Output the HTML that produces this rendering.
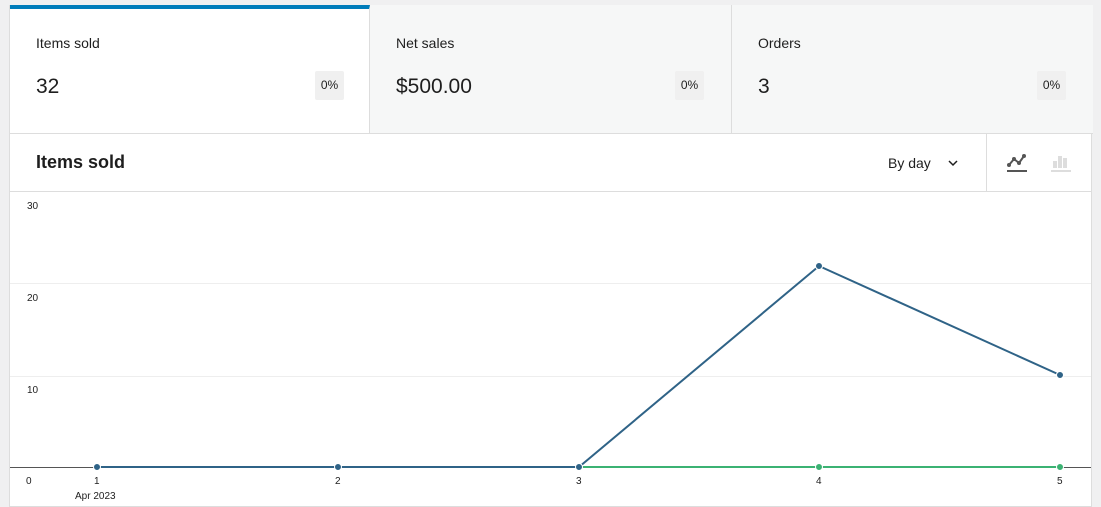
<!DOCTYPE html><html><head><style>
body{margin:0;background:#f0f0f1;font-family:"Liberation Sans",sans-serif;color:#1e1e1e;width:1101px;height:507px;overflow:hidden;position:relative}
.card{position:absolute;left:9px;top:5px;width:1083px;height:502px;background:#fff;border:1px solid #ddd;border-top:none;box-sizing:border-box}
.tile{position:absolute;top:0;height:129px;box-sizing:border-box;border-bottom:1px solid #ddd}
.tile .l{position:absolute;left:26px;top:30px;font-size:14px}
.tile .v{position:absolute;left:26px;top:70px;font-size:21px;color:#1e1e1e}
.tile .b{position:absolute;top:66px;width:29px;height:29px;background:#f0f0f0;border-radius:2px;font-size:12px;line-height:29px;text-align:center}
</style></head><body>
<div class="card">
<div class="tile" style="left:0;width:360px;background:#fff;border-top:4px solid #007cba;border-right:1px solid #ddd"><div class="l" style="top:26px">Items sold</div><div class="v" style="top:66px">32</div><div class="b" style="left:305px;top:62px">0%</div></div>
<div class="tile" style="left:360px;width:362px;background:#f6f7f7;border-right:1px solid #ddd"><div class="l">Net sales</div><div class="v">$500.00</div><div class="b" style="left:305px">0%</div></div>
<div class="tile" style="left:722px;width:361px;background:#f6f7f7"><div class="l">Orders</div><div class="v">3</div><div class="b" style="left:305px">0%</div></div>
<div style="position:absolute;left:0;top:129px;width:100%;height:58px;border-bottom:1px solid #ddd;box-sizing:border-box">
<div style="position:absolute;left:26px;top:18px;font-size:18px;font-weight:bold">Items sold</div>
<div style="position:absolute;left:878px;top:21px;font-size:14px">By day</div>
<svg style="position:absolute;left:938px;top:25px" width="10" height="8"><path d="M1 2l4 4 4-4" stroke="#1e1e1e" stroke-width="1.5" fill="none"/></svg>
<div style="position:absolute;left:976px;top:0;width:1px;height:57px;background:#ddd"></div>
<svg style="position:absolute;left:996px;top:17px" width="24" height="22"><path d="M3 14l5-6 5 4 5-7" stroke="#555" stroke-width="2" fill="none"/><circle cx="3" cy="14" r="2" fill="#555"/><circle cx="8" cy="8" r="2" fill="#555"/><circle cx="13" cy="12" r="2" fill="#555"/><circle cx="18" cy="5" r="2" fill="#555"/><rect x="1" y="19" width="20" height="2" fill="#555"/></svg>
<svg style="position:absolute;left:1040px;top:17px" width="24" height="22"><rect x="3" y="10" width="4" height="7" fill="#ddd"/><rect x="8" y="5" width="4" height="12" fill="#ddd"/><rect x="13" y="7" width="4" height="10" fill="#ddd"/><rect x="1" y="19" width="20" height="2" fill="#ddd"/></svg>
</div>
</div>
<svg style="position:absolute;left:0;top:0" width="1101" height="507" font-family="Liberation Sans" font-size="10" fill="#1e1e1e">
<line x1="10" x2="1091" y1="283.5" y2="283.5" stroke="#eee"/><line x1="10" x2="1091" y1="376.5" y2="376.5" stroke="#eee"/><line x1="10" x2="1091" y1="467.5" y2="467.5" stroke="#555"/>
<text x="27" y="209">30</text><text x="27" y="301">20</text><text x="27" y="393">10</text><text x="26" y="484">0</text>
<text x="94" y="484">1</text><text x="75" y="499">Apr 2023</text><text x="335" y="484">2</text><text x="576" y="484">3</text><text x="816" y="484">4</text><text x="1057" y="484">5</text>
<polyline points="579,467 819,467 1060,467" stroke="#3bb273" stroke-width="2" fill="none"/>
<polyline points="97,467 338,467 579,467 819,266 1060,375" stroke="#2f6387" stroke-width="2" fill="none"/>
<g fill="#2f6387" stroke="#fff"><circle cx="97" cy="467" r="3.5"/><circle cx="338" cy="467" r="3.5"/><circle cx="579" cy="467" r="3.5"/><circle cx="819" cy="266" r="3.5"/><circle cx="1060" cy="375" r="3.5"/></g>
<g fill="#3bb273" stroke="#fff"><circle cx="819" cy="467" r="3.5"/><circle cx="1060" cy="467" r="3.5"/></g>
</svg>
</body></html>
